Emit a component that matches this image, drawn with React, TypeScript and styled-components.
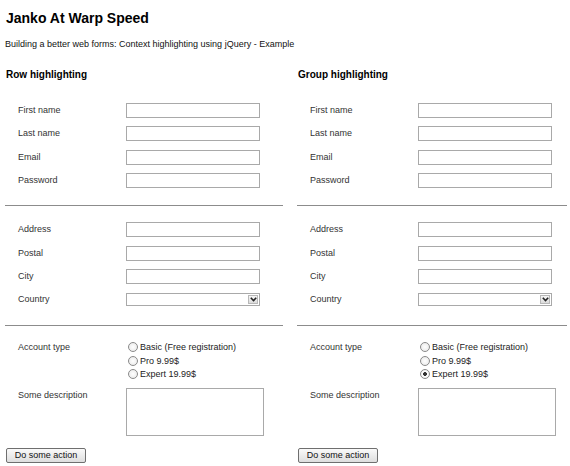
import React from "react";
import styled, { createGlobalStyle } from "styled-components";

const GlobalStyle = createGlobalStyle`
  body {
    margin: 0;
    background: #fff;
    color: #000;
    font-family: "Liberation Sans", Arial, sans-serif;
  }
`;

interface FormColumnProps {
  title: string;
  checked?: number;
  name: string;
}

const personFields = ["First name", "Last name", "Email", "Password"];
const addressFields = ["Address", "Postal", "City"];
const accountTypes = ["Basic (Free registration)", "Pro 9.99$", "Expert 19.99$"];

function FormColumn(props: FormColumnProps) {
  return (
    <Column>
      <Heading>{props.title}</Heading>
      <Section divided>
        {personFields.map((field) => (
          <Row key={field}>
            <Label>{field}</Label>
            <TextInput type={field === "Password" ? "password" : "text"} />
          </Row>
        ))}
      </Section>
      <Section divided>
        {addressFields.map((field) => (
          <Row key={field}>
            <Label>{field}</Label>
            <TextInput type="text" />
          </Row>
        ))}
        <Row>
          <Label>Country</Label>
          <SelectBox>
            <Select defaultValue="">
              <option value=""></option>
            </Select>
            <Arrow>
              <svg width="7" height="5" viewBox="0 0 7 5">
                <path d="M0.8 0.8 L3.5 3.6 L6.2 0.8" fill="none" stroke="#222" strokeWidth="1.6" />
              </svg>
            </Arrow>
          </SelectBox>
        </Row>
      </Section>
      <Section top={15}>
        <TopRow>
          <Label offset={1.5}>Account type</Label>
          <RadioGroup>
            {accountTypes.map((type, i) => (
              <RadioOption key={type}>
                <Radio type="radio" name={props.name} defaultChecked={props.checked === i} />
                {type}
              </RadioOption>
            ))}
          </RadioGroup>
        </TopRow>
        <TopRow gap={7}>
          <Label offset={2}>Some description</Label>
          <TextArea />
        </TopRow>
        <ActionButton type="button">Do some action</ActionButton>
      </Section>
    </Column>
  );
}

export default function App() {
  return (
    <Page>
      <GlobalStyle />
      <Title>Janko At Warp Speed</Title>
      <Intro>Building a better web forms: Context highlighting using jQuery - Example</Intro>
      <Columns>
        <FormColumn title="Row highlighting" name="row-account" />
        <FormColumn title="Group highlighting" name="group-account" checked={2} />
      </Columns>
    </Page>
  );
}

const Page = styled.div`
  padding: 0 5px;
`;

const Title = styled.h1`
  margin: 10px 0 0 1px;
  font-size: 14px;
  line-height: 16px;
  font-weight: bold;
`;

const Intro = styled.p`
  margin: 12px 0 0;
  font-size: 9px;
  line-height: 12px;
  color: #111;
`;

const Columns = styled.div`
  display: grid;
  grid-template-columns: 278px 270px;
  column-gap: 14px;
  margin-top: 19px;
`;

const Column = styled.div`
  display: flex;
  flex-direction: column;
`;

const Heading = styled.h2`
  margin: 0 0 0 1px;
  font-size: 10px;
  line-height: 12px;
  font-weight: bold;
`;

const Section = styled.div<{ divided?: boolean; top?: number }>`
  display: flex;
  flex-direction: column;
  padding: ${(p) => (p.top ?? 12)}px 0 ${(p) => (p.divided ? 13 : 0)}px;
  border-bottom: ${(p) => (p.divided ? "1px solid #8c8c8c" : "none")};

  &:first-of-type {
    padding-top: 18px;
  }
`;

const Row = styled.div`
  display: flex;
  align-items: center;
  height: 23.33px;
`;

const TopRow = styled.div<{ gap?: number }>`
  display: flex;
  align-items: flex-start;
  margin-top: ${(p) => p.gap ?? 0}px;
`;

const Label = styled.span<{ offset?: number }>`
  flex: 0 0 108px;
  padding: ${(p) => p.offset ?? 0}px 0 0 13px;
  font-size: 9px;
  line-height: 11px;
  color: #333;
`;

const TextInput = styled.input`
  box-sizing: border-box;
  width: 134px;
  height: 15px;
  margin: 0;
  padding: 0 2px;
  border: 1px solid #a9a9a9;
  font: 9px "Liberation Sans", Arial, sans-serif;
`;

const SelectBox = styled.div`
  box-sizing: border-box;
  display: flex;
  align-items: center;
  width: 134px;
  height: 13px;
  border: 1px solid #a9a9a9;
  background: #fff;
`;

const Select = styled.select`
  flex: 1;
  height: 100%;
  border: 0;
  padding: 0;
  appearance: none;
  background: transparent;
  font: 9px "Liberation Sans", Arial, sans-serif;
  outline: none;
`;

const Arrow = styled.span`
  box-sizing: border-box;
  display: flex;
  align-items: center;
  justify-content: center;
  width: 10px;
  height: 9px;
  margin-right: 1px;
  border: 1px solid #b8b8b8;
  background: linear-gradient(#f6f6f6, #dcdcdc);
`;

const RadioGroup = styled.div`
  display: flex;
  flex-direction: column;
  padding-left: 2px;
`;

const RadioOption = styled.label`
  display: flex;
  align-items: center;
  gap: 2px;
  height: 13.33px;
  font-size: 9px;
  color: #222;
`;

const Radio = styled.input`
  box-sizing: border-box;
  appearance: none;
  width: 10px;
  height: 10px;
  margin: 0;
  border: 1px solid #8a8a8a;
  border-radius: 50%;
  background: radial-gradient(circle, #fff 0, #e6e6e6 100%);

  &:checked {
    background: radial-gradient(circle, #333 0 1.6px, #fff 2.2px, #e6e6e6 100%);
  }
`;

const TextArea = styled.textarea`
  box-sizing: border-box;
  width: 138px;
  height: 48px;
  margin: 0;
  padding: 2px;
  border: 1px solid #a9a9a9;
  resize: none;
  font: 9px "Liberation Sans", Arial, sans-serif;
`;

const ActionButton = styled.button`
  align-self: flex-start;
  box-sizing: border-box;
  width: 80px;
  height: 15px;
  margin: 12px 0 0 1px;
  padding: 0;
  border: 1px solid #6f6f6f;
  border-radius: 2px;
  background: linear-gradient(#fafafa, #dedede);
  color: #111;
  font: 9px "Liberation Sans", Arial, sans-serif;
`;
